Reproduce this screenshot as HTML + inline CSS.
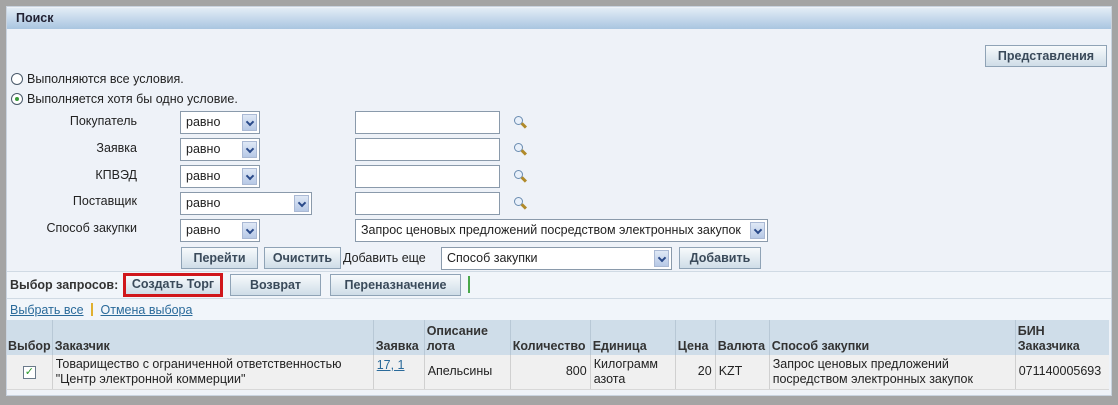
<!DOCTYPE html>
<html><head><meta charset="utf-8"><style>
*{box-sizing:border-box;margin:0;padding:0}
body{width:1118px;height:405px;overflow:hidden;background:#a4a4a4;font-family:"Liberation Sans","DejaVu Sans",sans-serif;font-size:12.5px;color:#222;position:relative}
.a{position:absolute}
#f{left:6px;top:6px;width:1106px;height:390px;background:#eef2f8;border:1px solid #c9d3df}
.hd{left:7px;top:8px;width:1104px;height:21px;background:linear-gradient(#e2ecf6,#a9c5e0);font-weight:bold;padding:3px 9px;color:#223}
.btn{position:absolute;height:22px;border:1px solid #8fa3b6;background:linear-gradient(#f7fafc,#cfdde8);font-weight:bold;color:#3a4a5a;text-align:center;line-height:20px;font-size:12.5px}
.sel{position:absolute;height:23px;border:1px solid #8a9aab;background:#fff;padding-left:5px;line-height:21px}
.sel i{position:absolute;right:2px;top:2px;width:15px;height:17px;background:linear-gradient(#dfe8f6,#b7c9e6);border:1px solid #aab9d4}
.sel i:after{content:"";position:absolute;left:4px;top:4px;width:4px;height:4px;border-right:2px solid #2a4a8a;border-bottom:2px solid #2a4a8a;transform:rotate(45deg)}
.inp{position:absolute;width:145px;height:23px;border:1px solid #8a9aab;background:#fff}
.lbl{position:absolute;width:130px;text-align:right;left:7px}
.mag{position:absolute;width:9px;height:9px;border:1.5px solid #6a8cb0;border-radius:50%;background:#e8f0fa}
.mag:after{content:"";position:absolute;left:6px;top:7px;width:6px;height:2.5px;background:#b08a2a;transform:rotate(45deg)}
.rad{position:absolute;width:12px;height:12px;border:1px solid #4a5a6a;border-radius:50%;background:#fff}
table{position:absolute;left:7px;top:320px;width:1102px;border-collapse:collapse}
th{background:#cfdde9;text-align:left;vertical-align:bottom;font-weight:bold;color:#333;padding:1px 2px;border-left:1px solid #b8c8d6;line-height:15px}
td{background:#f0f0f0;border-left:1px solid #d0d0d0;padding:1px 3px;vertical-align:middle;line-height:15px;border-bottom:1px solid #d8d8d8}
a{color:#2a6a9a}
</style></head><body>
<div id="f" class="a"></div>
<div class="a hd">Поиск</div>
<div class="btn" style="left:985px;top:45px;width:122px">Представления</div>
<div class="rad" style="left:11px;top:73px"></div><div class="a" style="left:27px;top:72px">Выполняются все условия.</div>
<div class="rad" style="left:11px;top:93px"><div class="a" style="left:3px;top:3px;width:4px;height:4px;border-radius:50%;background:#3a9a3a"></div></div><div class="a" style="left:27px;top:92px">Выполняется хотя бы одно условие.</div>

<div class="lbl" style="top:114px">Покупатель</div>
<div class="lbl" style="top:141px">Заявка</div>
<div class="lbl" style="top:168px">КПВЭД</div>
<div class="lbl" style="top:194px">Поставщик</div>
<div class="lbl" style="top:221px">Способ закупки</div>

<div class="sel" style="left:180px;top:111px;width:80px">равно<i></i></div>
<div class="sel" style="left:180px;top:138px;width:80px">равно<i></i></div>
<div class="sel" style="left:180px;top:165px;width:80px">равно<i></i></div>
<div class="sel" style="left:180px;top:192px;width:132px">равно<i></i></div>
<div class="sel" style="left:180px;top:219px;width:80px">равно<i></i></div>

<div class="inp" style="left:355px;top:111px"></div>
<div class="inp" style="left:355px;top:138px"></div>
<div class="inp" style="left:355px;top:165px"></div>
<div class="inp" style="left:355px;top:192px"></div>
<div class="mag" style="left:514px;top:116px"></div>
<div class="mag" style="left:514px;top:143px"></div>
<div class="mag" style="left:514px;top:170px"></div>
<div class="mag" style="left:514px;top:197px"></div>
<div class="sel" style="left:355px;top:219px;width:413px">Запрос ценовых предложений посредством электронных закупок<i></i></div>

<div class="btn" style="left:181px;top:247px;width:77px">Перейти</div>
<div class="btn" style="left:264px;top:247px;width:77px">Очистить</div>
<div class="a" style="left:343px;top:251px">Добавить еще</div>
<div class="sel" style="left:441px;top:247px;width:231px">Способ закупки<i></i></div>
<div class="btn" style="left:679px;top:247px;width:82px">Добавить</div>

<div class="a" style="left:7px;top:271px;width:1104px;height:1px;background:#d0dae4"></div>
<div class="a" style="left:7px;top:272px;width:1104px;height:27px;background:#f1f5fa"></div>
<div class="a" style="left:10px;top:278px;font-weight:bold;color:#333">Выбор запросов:</div>
<div class="btn" style="left:123px;top:273px;width:100px;height:24px;border:3px solid #d0161b;line-height:17px">Создать Торг</div>
<div class="btn" style="left:230px;top:274px;width:91px">Возврат</div>
<div class="btn" style="left:330px;top:274px;width:131px">Переназначение</div>
<div class="a" style="left:468px;top:276px;width:2px;height:17px;background:#4aa84a"></div>
<div class="a" style="left:7px;top:298px;width:1104px;height:1px;background:#d0dae4"></div>
<div class="a" style="left:7px;top:299px;width:1104px;height:21px;background:#f1f5fa"></div>
<div class="a" style="left:10px;top:303px"><a href="#x">Выбрать все</a> <span style="display:inline-block;width:2px;height:13px;background:#e0b030;vertical-align:-2px;margin:0 4px"></span> <a href="#x">Отмена выбора</a></div>

<table>
<tr style="height:35px"><th style="width:43px;border-left:none;padding:1px 1px">Выбор</th><th style="width:321px">Заказчик</th><th style="width:51px">Заявка</th><th style="width:86px">Описание<br>лота</th><th style="width:80px">Количество</th><th style="width:85px">Единица</th><th style="width:40px">Цена</th><th style="width:54px">Валюта</th><th style="width:246px">Способ закупки</th><th>БИН<br>Заказчика</th></tr>
<tr style="height:34px"><td style="border-left:none;text-align:center"><span style="display:inline-block;width:13px;height:13px;border:1px solid #6a7a8a;background:#fff;color:#2a9a2a;font-size:11px;line-height:11px;font-weight:bold">✓</span></td><td>Товарищество с ограниченной ответственностью<br>"Центр электронной коммерции"</td><td style="vertical-align:top;padding-top:3px"><a href="#x">17, 1</a></td><td>Апельсины</td><td style="text-align:right">800</td><td>Килограмм<br>азота</td><td style="text-align:right">20</td><td>KZT</td><td>Запрос ценовых предложений<br>посредством электронных закупок</td><td>071140005693</td></tr>
</table>
</body></html>
